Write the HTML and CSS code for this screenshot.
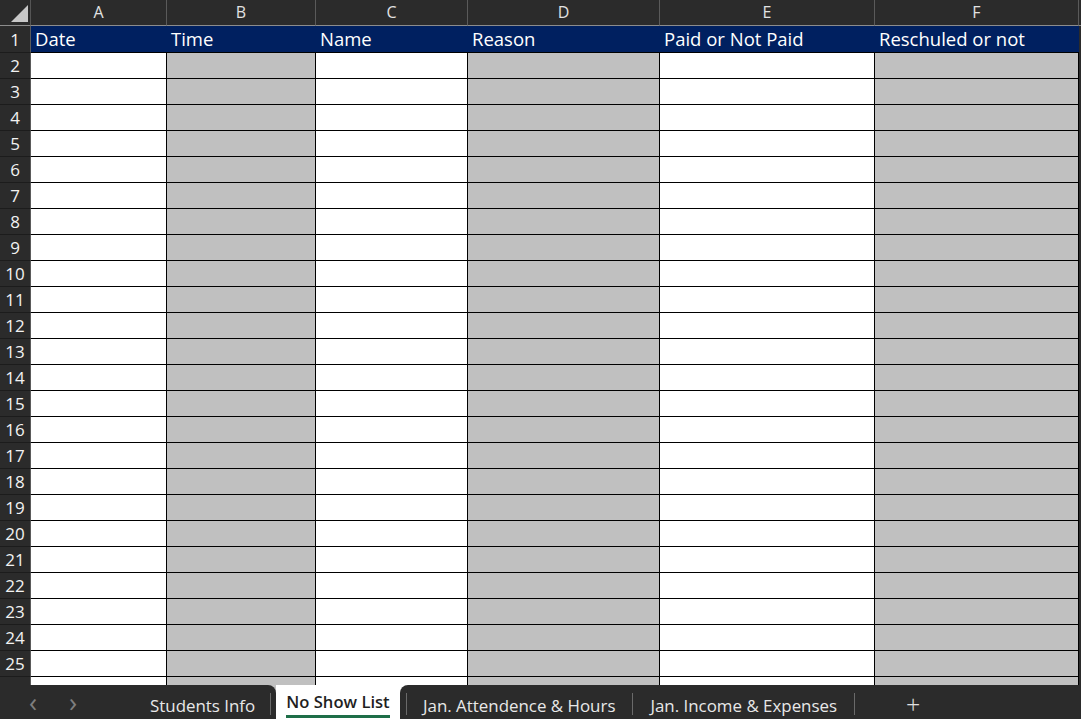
FILE: index.html
```html
<!DOCTYPE html>
<html>
<head>
<meta charset="utf-8">
<link rel="stylesheet" href="styles.css">
</head>
<body>
<div class="app">
  <div class="sheet">
    <div class="corner"><svg width="17" height="17" viewBox="0 0 17 17"><polygon points="17,0 17,17 0,17" fill="#c8c8c8"/></svg></div>
    <div class="ch">A</div>
    <div class="ch">B</div>
    <div class="ch">C</div>
    <div class="ch">D</div>
    <div class="ch">E</div>
    <div class="ch">F</div>
    <div class="ch fill"></div>

    <div class="rh first">1</div>
    <div class="hc">Date</div>
    <div class="hc">Time</div>
    <div class="hc">Name</div>
    <div class="hc">Reason</div>
    <div class="hc">Paid or Not Paid</div>
    <div class="hc">Reschuled or not</div>
    <div class="hc fill dark"></div>

    <div class="rows">
      <div class="rh">2</div><div class="rh">3</div><div class="rh">4</div><div class="rh">5</div>
      <div class="rh">6</div><div class="rh">7</div><div class="rh">8</div><div class="rh">9</div>
      <div class="rh">10</div><div class="rh">11</div><div class="rh">12</div><div class="rh">13</div>
      <div class="rh">14</div><div class="rh">15</div><div class="rh">16</div><div class="rh">17</div>
      <div class="rh">18</div><div class="rh">19</div><div class="rh">20</div><div class="rh">21</div>
      <div class="rh">22</div><div class="rh">23</div><div class="rh">24</div><div class="rh">25</div>
      <div class="rh"></div>
    </div>
    <div class="col white"></div>
    <div class="col grey"></div>
    <div class="col white"></div>
    <div class="col grey"></div>
    <div class="col white"></div>
    <div class="col grey"></div>
    <div class="col fill dark"></div>
  </div>

  <div class="tabbar">
    <div class="seg left">
      <span class="arrow">&#x2039;</span>
      <span class="arrow">&#x203A;</span>
      <span class="tab first-tab">Students Info</span>
      <span class="sep push"></span>
    </div>
    <div class="tab active"><span class="label">No Show List</span></div>
    <div class="seg right">
      <span class="sep"></span>
      <span class="tab t3">Jan. Attendence &amp; Hours</span>
      <span class="sep"></span>
      <span class="tab t4">Jan. Income &amp; Expenses</span>
      <span class="sep"></span>
      <span class="plus">+</span>
    </div>
  </div>
</div>
</body>
</html>
```

FILE: styles.css
```css
html, body {
  margin: 0;
  padding: 0;
  background: #2b2b2b;
}

.app {
  width: 1081px;
  height: 719px;
  display: flex;
  flex-direction: column;
  overflow: hidden;
  font-family: "Open Sans", "Noto Sans", sans-serif;
}

.sheet {
  height: 685px;
  flex: none;
  display: grid;
  grid-template-columns: 31px 136px 149px 152px 192px 215px 204px 1fr;
  grid-template-rows: 26px 27px 1fr;
  overflow: hidden;
  background: #2b2b2b;
}

.corner {
  background: #2b2b2b;
  border-bottom: 1px solid #8c8c8c;
  border-right: 1px solid #555;
  box-sizing: border-box;
  display: flex;
  align-items: flex-start;
  justify-content: flex-end;
  padding: 5px 2px 0 0;
}

.ch {
  box-sizing: border-box;
  background: #2b2b2b;
  color: #e2e2e2;
  font-size: 16px;
  text-align: center;
  line-height: 25px;
  border-bottom: 1px solid #8c8c8c;
  border-right: 1px solid #5a5a5a;
}

.ch.fill {
  border-right: none;
}

.rh {
  box-sizing: border-box;
  height: 26px;
  flex: none;
  color: #f2f2f2;
  font-size: 17px;
  text-align: center;
  line-height: 26px;
  background: #2b2b2b;
  border-bottom: 1px solid #1c1c1c;
  border-right: 1px solid #5a5a5a;
}

.rh.first {
  height: 27px;
  line-height: 27px;
}

.rows {
  display: flex;
  flex-direction: column;
  overflow: hidden;
}

.hc {
  box-sizing: border-box;
  background: #002060;
  color: #ffffff;
  font-size: 18.5px;
  line-height: 26px;
  padding-left: 4px;
  white-space: nowrap;
  border-bottom: 1px solid #000;
}

.hc.dark {
  background: #2b2b2b;
  border-bottom: none;
}

.col {
  box-sizing: border-box;
  border-right: 1px solid #000;
}

.col.white {
  background: repeating-linear-gradient(to bottom, #ffffff 0, #ffffff 25px, #000 25px, #000 26px);
}

.col.grey {
  background: repeating-linear-gradient(to bottom, #c0c0c0 0, #c0c0c0 25px, #000 25px, #000 26px);
}

.col.dark {
  background: #2b2b2b;
  border-right: none;
}

/* tab bar */
.tabbar {
  flex: 1;
  display: flex;
  background: linear-gradient(to right, #c0c0c0 0, #c0c0c0 315px, #ffffff 315px);
}

.seg {
  background: #2b2b2b;
  display: flex;
  align-items: center;
  color: #e8e8e8;
  font-size: 16.9px;
}

.seg.left {
  width: 276px;
  box-sizing: border-box;
  padding-left: 13px;
  padding-right: 5px;
  border-top-right-radius: 8px;
}

.seg.right {
  flex: 1;
  border-top-left-radius: 8px;
  padding-left: 6px;
}

.arrow {
  width: 40px;
  text-align: center;
  color: #7e7e7e;
  font-size: 27px;
  line-height: 24px;
  padding-top: 0;
}

.tab {
  white-space: nowrap;
  padding-top: 6px;
}

.first-tab {
  margin-left: 57px;
}

.sep {
  width: 1px;
  height: 22px;
  background: #6a6a6a;
  margin-top: 4px;
  flex: none;
}

.sep.push {
  margin-left: auto;
}

.t3 {
  margin: 0 17px 0 16px;
}

.t4 {
  margin: 0 17px 0 17px;
}

.plus {
  margin-left: 51px;
  font-size: 25px;
  font-weight: 300;
  color: #e0e0e0;
  line-height: 24px;
  padding-top: 3px;
}

.tab.active {
  width: 124px;
  background: #ffffff;
  display: flex;
  justify-content: center;
  padding-top: 4px;
  box-sizing: border-box;
}

.tab.active .label {
  color: #1f1f1f;
  font-size: 16.6px;
  font-weight: 600;
  line-height: 25px;
  height: 29px;
  box-sizing: border-box;
  border-bottom: 3px solid #1e6e48;
}
```
